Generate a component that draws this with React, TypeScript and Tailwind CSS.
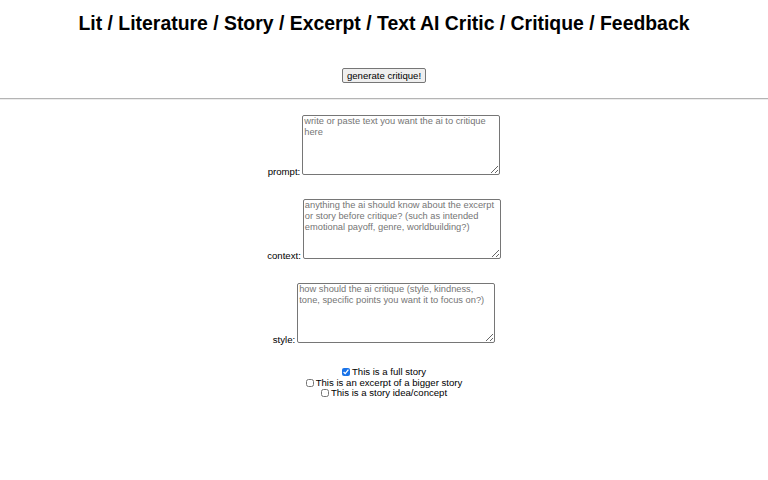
const fields = [
  { label: "prompt", placeholder: "write or paste text you want the ai to critique here" },
  {
    label: "context",
    placeholder:
      "anything the ai should know about the excerpt or story before critique? (such as intended emotional payoff, genre, worldbuilding?)",
  },
  {
    label: "style",
    placeholder: "how should the ai critique (style, kindness, tone, specific points you want it to focus on?)",
  },
];

const storyTypes = [
  { label: "This is a full story", checked: true },
  { label: "This is an excerpt of a bigger story", checked: false },
  { label: "This is a story idea/concept", checked: false },
];

export default function App() {
  return (
    <div className="min-h-[480px] bg-white font-['Liberation_Sans',Arial,sans-serif] text-black">
      <h1 className="pt-[11px] text-center text-[19.4px] font-bold leading-[24px]">
        Lit / Literature / Story / Excerpt / Text AI Critic / Critique / Feedback
      </h1>

      <div className="mt-[33px] flex justify-center">
        <button
          type="button"
          className="h-[15px] w-[84px] whitespace-nowrap rounded-[2px] border border-[#767676] bg-[#efefef] px-0 text-[9.6px] leading-[13px]"
        >
          generate critique!
        </button>
      </div>

      {/* inset-style rule */}
      <hr className="mt-[15px] border-t border-b border-t-[#b4b4b4] border-b-[#ececec]" />

      <div className="mt-[15px] flex flex-col gap-[24px]">
        {fields.map((field) => (
          <div key={field.label} className="flex items-end justify-center">
            <label className="mr-[2px] text-[9.6px] leading-[7px]">{field.label}:</label>
            <textarea
              placeholder={field.placeholder}
              className="h-[60px] w-[198px] resize rounded-[2px] border border-[#767676] px-[1px] py-0 text-[9.3px] leading-[11px] placeholder:text-[#757575]"
            />
          </div>
        ))}
      </div>

      <div className="mt-[24px] flex flex-col items-center text-[9.6px] leading-[10.5px]">
        {storyTypes.map((type) => (
          <label key={type.label} className="flex items-center">
            <input
              type="checkbox"
              defaultChecked={type.checked}
              className="m-0 mr-[2px] h-[8px] w-[8px] accent-[#1a73e8]"
            />
            {type.label}
          </label>
        ))}
      </div>
    </div>
  );
}
